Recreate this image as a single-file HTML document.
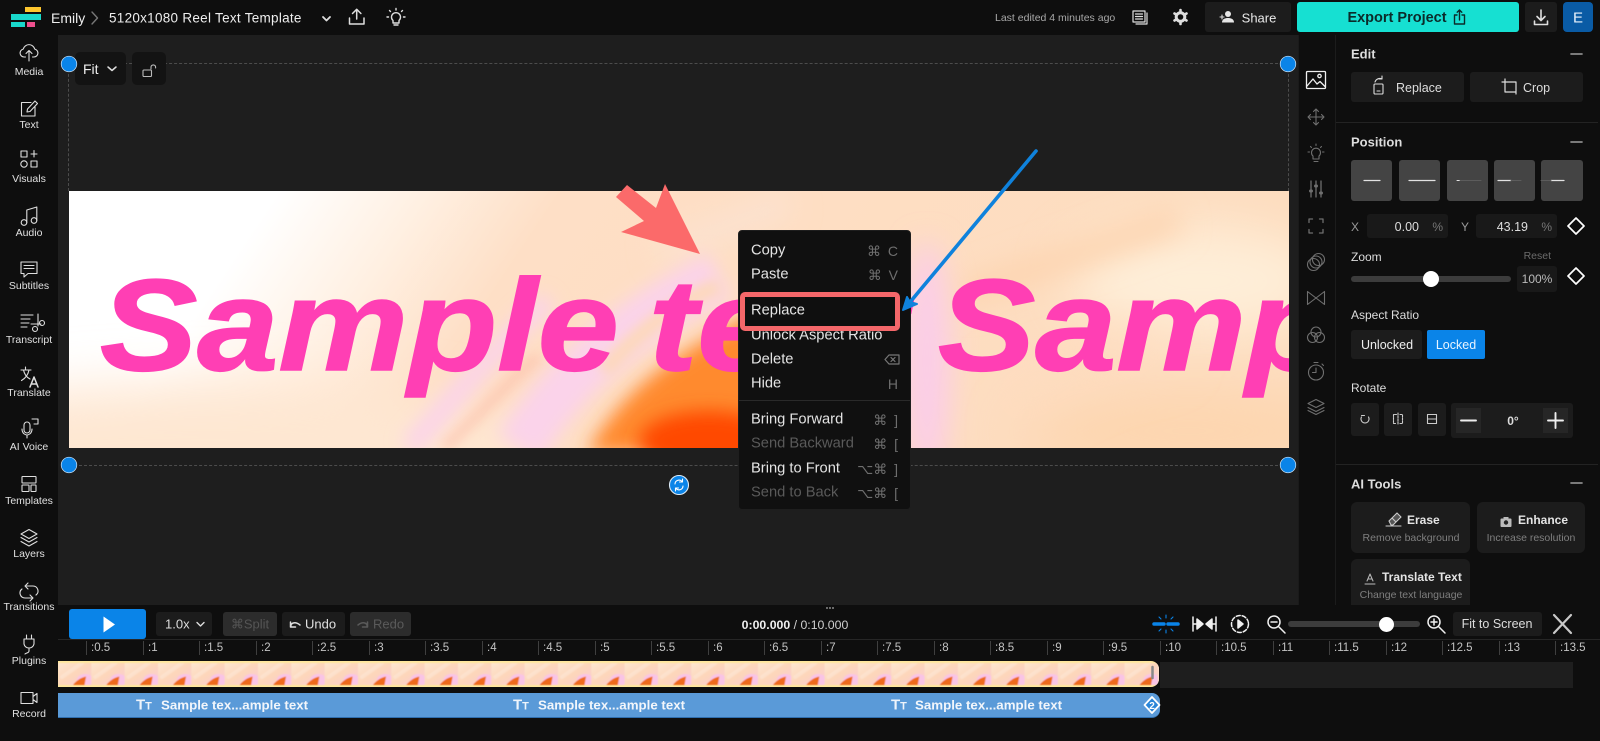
<!DOCTYPE html>
<html><head><meta charset="utf-8"><title>Replace</title>
<style>
html,body{margin:0;padding:0;background:#0e0e0e}
#p{position:relative;width:1600px;height:741px;overflow:hidden;background:#0e0e0e;font-family:"Liberation Sans",sans-serif;color:#e8e8e8}
#p div{position:absolute}
.t{white-space:nowrap;line-height:1;transform:translateY(-50%)}
.c{white-space:nowrap;line-height:1;transform:translate(-50%,-50%);text-align:center}
.r{white-space:nowrap;line-height:1;transform:translate(-100%,-50%);text-align:right}
.rl{font-size:10.5px;color:#e0e0e0;left:29px}
.b{background:#1c1c1c;border-radius:3px}
.h{font-size:13px;color:#ddd}
.pb{background:#444;border-radius:3px;top:160px;height:41px}
.m{font-size:14.7px;color:#e4e4e4;left:751px}
.d{color:#5a5a5a}
.s{font-size:14px;color:#6e6e6e;left:898px;word-spacing:3px}
.tk{top:641px;height:14px;border-left:1px solid #3f3f3f;padding-left:4px;font-size:11.5px;line-height:14px;color:#c4c4c4;white-space:nowrap}
.tt{font-size:13.3px;font-weight:bold;color:#f2f6fb;top:705px}
svg{position:absolute;left:0;top:0}
</style></head><body><div id="p">

<div style="left:58px;top:35px;width:1240px;height:570px;background:#1e1e1e"></div>
<div style="left:1298px;top:35px;width:1px;height:570px;background:#1a1a1a"></div>
<div style="left:1335px;top:35px;width:1px;height:570px;background:#1c1c1c"></div>

<!-- image -->
<div style="left:68.5px;top:191px;width:1220.5px;height:257px;overflow:hidden;background:#fde2c8">
<svg width="1221" height="257" viewBox="0 0 1221 257">
<defs>
<filter id="f1" x="-60%" y="-60%" width="220%" height="220%"><feGaussianBlur stdDeviation="26"/></filter>
<filter id="f0" x="-60%" y="-60%" width="220%" height="220%"><feGaussianBlur stdDeviation="14"/></filter>
<filter id="f2" x="-50%" y="-50%" width="200%" height="200%"><feGaussianBlur stdDeviation="9"/></filter>
<filter id="f3" x="-50%" y="-50%" width="200%" height="200%"><feGaussianBlur stdDeviation="6"/></filter>
<linearGradient id="bg" x1="0" y1="0" x2="1" y2="0" gradientTransform="rotate(8)">
<stop offset="0" stop-color="#fff"/><stop offset=".17" stop-color="#fff"/><stop offset=".29" stop-color="#fff0e2"/><stop offset=".4" stop-color="#fedfc6"/><stop offset="1" stop-color="#fddcbe"/>
</linearGradient>
</defs>
<rect width="1221" height="257" fill="url(#bg)"/>
<ellipse cx="140" cy="262" rx="340" ry="70" fill="#fee7d2" filter="url(#f1)"/>
<ellipse cx="1130" cy="90" rx="130" ry="55" fill="#feeed8" filter="url(#f1)"/>
<ellipse cx="1120" cy="240" rx="170" ry="35" fill="#fdd5ae" filter="url(#f1)"/>
<path d="M840 8L1040 8" stroke="#fbd5dc" stroke-width="24" filter="url(#f0)"/>
<path d="M890 105L1110 28" stroke="#fdd4b0" stroke-width="26" filter="url(#f0)"/>
<ellipse cx="858" cy="170" rx="24" ry="120" fill="#fbcde8" filter="url(#f0)"/>
<path d="M930 220C1000 170 1040 160 1100 150" stroke="#fedcc0" stroke-width="30" filter="url(#f1)"/>
<path d="M590 62C630 45 680 28 720 10" stroke="#fce2d0" stroke-width="26" filter="url(#f0)"/>
<path d="M450 257C500 180 560 130 650 85" stroke="#fbd3ea" stroke-width="50" fill="none" filter="url(#f2)"/>
<path d="M340 257C380 215 430 150 480 110" stroke="#fbd3ea" stroke-width="20" fill="none" filter="url(#f2)"/>
<path d="M375 257C410 225 440 190 470 165" stroke="#fcb4a0" stroke-width="10" fill="none" opacity=".55" filter="url(#f3)"/>
<path d="M535 180C570 140 610 110 650 95" stroke="#fdd9ba" stroke-width="16" fill="none" filter="url(#f3)"/>
<path d="M518 262C555 195 610 160 690 120V262Z" fill="#ff8a2e" filter="url(#f2)"/>
<ellipse cx="640" cy="250" rx="70" ry="30" fill="#ff4800" filter="url(#f2)"/>
</svg>
<div style="left:31px;top:69px;font-size:130px;line-height:130px;font-weight:bold;font-style:italic;color:#ff3fb4;white-space:pre;word-spacing:-9.5px;transform:scaleX(1.122);transform-origin:0 0;-webkit-text-stroke:1.6px #ff3fb4">Sample text Sample text</div>
</div>

<!-- dashed selection -->
<div style="left:69px;top:63px;width:1219px;border-top:1px dashed #4c4c4c"></div>
<div style="left:69px;top:465px;width:1219px;border-top:1px dashed #4c4c4c"></div>
<div style="left:68px;top:64px;height:127px;border-left:1px dashed #4c4c4c"></div>
<div style="left:1288px;top:64px;height:127px;border-left:1px dashed #4c4c4c"></div>

<!-- top bar -->
<div style="left:0;top:0;width:1600px;height:35px;background:#0e0e0e"></div>
<div style="left:25px;top:7px;width:16px;height:5px;background:#fdc62e"></div>
<div style="left:11px;top:14px;width:30px;height:6px;background:#19d8cb"></div>
<div style="left:11px;top:22px;width:14px;height:5px;background:#19d8cb"></div>
<div style="left:27px;top:22px;width:8px;height:5px;background:#ee4f8d"></div>
<div class="t" style="left:51px;top:18px;font-size:14px;color:#eee">Emily</div>
<div class="t" style="left:109px;top:18px;font-size:13.5px;color:#eee;letter-spacing:.28px">5120x1080 Reel Text Template</div>
<div class="t" style="left:995px;top:18px;font-size:10.5px;color:#a8a8a8">Last edited 4 minutes ago</div>
<div class="b" style="left:1205px;top:2px;width:86px;height:30px"></div>
<div class="c" style="left:1259px;top:18px;font-size:13px;color:#e8e8e8">Share</div>
<div style="left:1297px;top:2px;width:222px;height:30px;background:#16e0d2;border-radius:3px"></div>
<div class="c" style="left:1397px;top:18px;font-size:14.5px;font-weight:bold;color:#0b2b2a">Export Project</div>
<div class="b" style="left:1525px;top:2px;width:32px;height:30px"></div>
<div style="left:1563px;top:2px;width:30px;height:30px;background:#0a5ba5;border-radius:4px"></div>
<div class="c" style="left:1578px;top:18px;font-size:15px;color:#e8f2fb">E</div>

<!-- left rail -->
<div class="c rl" style="top:72px">Media</div>
<div class="c rl" style="top:125px">Text</div>
<div class="c rl" style="top:179px">Visuals</div>
<div class="c rl" style="top:233px">Audio</div>
<div class="c rl" style="top:286px">Subtitles</div>
<div class="c rl" style="top:340px">Transcript</div>
<div class="c rl" style="top:393px">Translate</div>
<div class="c rl" style="top:447px">AI Voice</div>
<div class="c rl" style="top:501px">Templates</div>
<div class="c rl" style="top:554px">Layers</div>
<div class="c rl" style="top:607px">Transitions</div>
<div class="c rl" style="top:661px">Plugins</div>
<div class="c rl" style="top:714px">Record</div>

<!-- fit / lock -->
<div style="left:75px;top:52px;width:51px;height:33px;background:#131313;border-radius:5px"></div>
<div class="t" style="left:83px;top:69px;font-size:14px;color:#eee">Fit</div>
<div style="left:132px;top:52px;width:34px;height:33px;background:#131313;border-radius:5px"></div>

<!-- right panel -->
<div style="left:1336px;top:35px;width:264px;height:570px;background:#0e0e0e"></div>
<div style="left:1299px;top:35px;width:36px;height:570px;background:#0e0e0e"></div>
<div style="left:1336px;top:122px;width:262px;height:1px;background:#232323"></div>
<div style="left:1336px;top:464px;width:262px;height:1px;background:#232323"></div>
<div class="t h" style="left:1351px;top:54px;font-weight:bold">Edit</div>
<div class="t h" style="left:1351px;top:142px;font-weight:bold">Position</div>
<div class="t h" style="left:1351px;top:484px;font-weight:bold">AI Tools</div>
<div class="b" style="left:1351px;top:72px;width:113px;height:30px"></div>
<div class="b" style="left:1470px;top:72px;width:113px;height:30px"></div>
<div class="t" style="left:1396px;top:88px;font-size:12.5px;color:#ddd">Replace</div>
<div class="t" style="left:1523px;top:88px;font-size:12.5px;color:#ddd">Crop</div>
<div class="pb" style="left:1351px;width:41px"></div>
<div class="pb" style="left:1399px;width:41px"></div>
<div class="pb" style="left:1447px;width:41px"></div>
<div class="pb" style="left:1494px;width:41px"></div>
<div class="pb" style="left:1541px;width:42px"></div>
<div class="t" style="left:1351px;top:227px;font-size:12px;color:#999">X</div>
<div class="t" style="left:1461px;top:227px;font-size:12px;color:#999">Y</div>
<div class="b" style="left:1367px;top:214px;width:81px;height:24px;background:#191919"></div>
<div class="b" style="left:1476px;top:214px;width:81px;height:24px;background:#191919"></div>
<div class="r" style="left:1419px;top:227px;font-size:12.5px;color:#ddd">0.00</div>
<div class="r" style="left:1528px;top:227px;font-size:12.5px;color:#ddd">43.19</div>
<div class="r" style="left:1443px;top:227px;font-size:12px;color:#777">%</div>
<div class="r" style="left:1552px;top:227px;font-size:12px;color:#777">%</div>
<div class="t h" style="left:1351px;top:257px;font-size:12px">Zoom</div>
<div class="r" style="left:1551px;top:256px;font-size:10.5px;color:#6c6c6c">Reset</div>
<div style="left:1351px;top:276px;width:160px;height:6px;background:#3c3c3c;border-radius:3px"></div>
<div style="left:1423px;top:271px;width:16px;height:16px;background:#fff;border-radius:50%"></div>
<div class="b" style="left:1517px;top:266px;width:40px;height:26px;background:#191919"></div>
<div class="c" style="left:1537px;top:279px;font-size:12px;color:#bbb">100%</div>
<div class="t h" style="left:1351px;top:315px;font-size:12px">Aspect Ratio</div>
<div class="b" style="left:1351px;top:330px;width:71px;height:29px"></div>
<div class="c" style="left:1387px;top:345px;font-size:12.5px;color:#eee">Unlocked</div>
<div style="left:1427px;top:330px;width:58px;height:29px;background:#0a84e8;border-radius:2px"></div>
<div class="c" style="left:1456px;top:345px;font-size:12.5px;color:#e8f4ff">Locked</div>
<div class="t h" style="left:1351px;top:388px;font-size:12px">Rotate</div>
<div class="b" style="left:1351px;top:403px;width:28px;height:33px"></div>
<div class="b" style="left:1384px;top:403px;width:28px;height:33px"></div>
<div class="b" style="left:1418px;top:403px;width:28px;height:33px"></div>
<div class="b" style="left:1451px;top:403px;width:122px;height:35px"></div>
<div style="left:1456px;top:408px;width:25px;height:25px;background:#262626"></div>
<div style="left:1543px;top:408px;width:25px;height:25px;background:#262626"></div>
<div class="c" style="left:1513px;top:421px;font-size:12px;font-weight:bold;color:#ddd">0°</div>
<div class="b" style="left:1351px;top:502px;width:119px;height:51px;border-radius:6px"></div>
<div class="b" style="left:1477px;top:502px;width:108px;height:51px;border-radius:6px"></div>
<div class="b" style="left:1351px;top:559px;width:119px;height:52px;border-radius:6px"></div>
<div class="t" style="left:1407px;top:520px;font-size:12px;font-weight:bold;color:#e4e4e4">Erase</div>
<div class="t" style="left:1518px;top:520px;font-size:12px;font-weight:bold;color:#e4e4e4">Enhance</div>
<div class="t" style="left:1382px;top:577px;font-size:12px;font-weight:bold;color:#e4e4e4">Translate Text</div>
<div class="c" style="left:1411px;top:538px;font-size:10.5px;color:#7f7f7f">Remove background</div>
<div class="c" style="left:1531px;top:538px;font-size:10.5px;color:#7f7f7f">Increase resolution</div>
<div class="c" style="left:1411px;top:595px;font-size:10.5px;color:#7f7f7f">Change text language</div>

<!-- bottom -->
<div style="left:58px;top:605px;width:1542px;height:136px;background:#0e0e0e"></div>
<div style="left:58px;top:639px;width:1542px;height:1px;background:#262626"></div>
<div style="left:69px;top:609px;width:77px;height:30px;background:#0a84e8;border-radius:3px"></div>
<div class="b" style="left:156px;top:612px;width:56px;height:24px"></div>
<div class="t" style="left:165px;top:624px;font-size:13px;color:#ddd">1.0x</div>
<div class="b" style="left:223px;top:612px;width:54px;height:24px;background:#2c2c2c"></div>
<div class="c" style="left:250px;top:624px;font-size:13px;color:#555">⌘Split</div>
<div class="b" style="left:282px;top:612px;width:63px;height:24px"></div>
<div class="t" style="left:305px;top:624px;font-size:13px;color:#e0e0e0">Undo</div>
<div class="b" style="left:350px;top:612px;width:61px;height:24px;background:#2c2c2c"></div>
<div class="t" style="left:373px;top:624px;font-size:13px;color:#5a5a5a">Redo</div>
<div class="c" style="left:795px;top:625px;font-size:12.3px;color:#cfcfcf"><b style="color:#eee;font-weight:bold">0:00.000</b> / 0:10.000</div>
<div style="left:1288px;top:621px;width:132px;height:6px;background:#3c3c3c;border-radius:3px"></div>
<div style="left:1379px;top:617px;width:15px;height:15px;background:#fff;border-radius:50%"></div>
<div class="b" style="left:1453px;top:612px;width:89px;height:24px"></div>
<div class="c" style="left:1497px;top:624px;font-size:12.5px;color:#ddd">Fit to Screen</div>

<!-- ruler -->
<div class="tk" style="left:86px">:0.5</div><div class="tk" style="left:143px">:1</div><div class="tk" style="left:199px">:1.5</div><div class="tk" style="left:256px">:2</div><div class="tk" style="left:312px">:2.5</div><div class="tk" style="left:369px">:3</div><div class="tk" style="left:425px">:3.5</div><div class="tk" style="left:482px">:4</div><div class="tk" style="left:538px">:4.5</div><div class="tk" style="left:595px">:5</div><div class="tk" style="left:651px">:5.5</div><div class="tk" style="left:708px">:6</div><div class="tk" style="left:764px">:6.5</div><div class="tk" style="left:821px">:7</div><div class="tk" style="left:877px">:7.5</div><div class="tk" style="left:934px">:8</div><div class="tk" style="left:990px">:8.5</div><div class="tk" style="left:1047px">:9</div><div class="tk" style="left:1103px">:9.5</div><div class="tk" style="left:1160px">:10</div><div class="tk" style="left:1216px">:10.5</div><div class="tk" style="left:1273px">:11</div><div class="tk" style="left:1329px">:11.5</div><div class="tk" style="left:1386px">:12</div><div class="tk" style="left:1442px">:12.5</div><div class="tk" style="left:1499px">:13</div><div class="tk" style="left:1555px">:13.5</div>

<div style="left:1160px;top:662px;width:413px;height:26px;background:#1e1e1e"></div>
<div style="left:58px;top:693px;width:1102px;height:25px;background:#5a9ad8;border-radius:0 8px 8px 0;border-bottom:1px solid #2f6fb0;box-sizing:border-box"></div>
<div class="t" style="left:136px;top:705px;font-size:15px;font-weight:bold;color:#eef4fb">T<span style="font-size:11px">T</span></div>
<div class="t" style="left:513px;top:705px;font-size:15px;font-weight:bold;color:#eef4fb">T<span style="font-size:11px">T</span></div>
<div class="t" style="left:891px;top:705px;font-size:15px;font-weight:bold;color:#eef4fb">T<span style="font-size:11px">T</span></div>
<div class="t tt" style="left:161px">Sample tex...ample text</div>
<div class="t tt" style="left:538px">Sample tex...ample text</div>
<div class="t tt" style="left:915px">Sample tex...ample text</div>

<!-- context menu -->
<div style="left:738px;top:230px;width:173px;height:280px;background:#101010;border-radius:4px;border:1px solid #1e1e1e;box-sizing:border-box"></div>
<div style="left:739px;top:400px;width:171px;height:1px;background:#2a2a2a"></div>
<div class="t m" style="top:250.500px">Copy</div>
<div class="t m" style="top:274.500px">Paste</div>
<div class="t m" style="top:335.500px">Unlock Aspect Ratio</div>
<div class="t m" style="top:359.500px">Delete</div>
<div class="t m" style="top:383.500px">Hide</div>
<div class="t m" style="top:419.500px">Bring Forward</div>
<div class="t m d" style="top:444px">Send Backward</div>
<div class="t m" style="top:468.500px">Bring to Front</div>
<div class="t m d" style="top:492.500px">Send to Back</div>
<div class="r s" style="top:250.500px">⌘ C</div>
<div class="r s" style="top:274.500px">⌘ V</div>
<div class="r s" style="top:383.500px">H</div>
<div class="r s" style="top:419.500px">⌘ ]</div>
<div class="r s" style="top:444px">⌘ [</div>
<div class="r s" style="top:468.500px">⌥⌘ ]</div>
<div class="r s" style="top:492.500px">⌥⌘ [</div>
<div style="left:740px;top:292px;width:160px;height:39px;box-sizing:border-box;border:5px solid #f4676a;border-radius:5px;background:#0f0f0f"></div>
<div class="t m" style="top:310.500px">Replace</div>

<!-- all vector icons -->
<svg width="1600" height="741" viewBox="0 0 1600 741" fill="none" stroke="#dedede" stroke-width="1.100" stroke-linecap="round" stroke-linejoin="round">
<defs>
<linearGradient id="tg" x1="0" y1="0" x2="1" y2="1"><stop offset="0" stop-color="#fde6d0"/><stop offset=".5" stop-color="#fdd6ba"/><stop offset="1" stop-color="#fbc8da"/></linearGradient>
<filter id="ts"><feGaussianBlur stdDeviation=".5"/></filter>
<pattern id="th" x="58" y="663" width="33.33" height="22" patternUnits="userSpaceOnUse">
<rect width="33.33" height="22" fill="url(#tg)" stroke="none"/>
<path d="M4 14L24 0" stroke="#fff" stroke-width="4" opacity=".2"/>
<ellipse cx="27" cy="17" rx="8" ry="6" fill="#f9c4e6" stroke="none"/>
<path d="M15 22C18 18 22 15 28 13.500L26.500 22Z" fill="#ee6a1e" stroke="none"/>
</pattern>
<clipPath id="cr"><path d="M58 661H1151a8 8 0 0 1 8 8V679a8 8 0 0 1-8 8H58Z"/></clipPath>
</defs>

<!-- top bar icons -->
<path d="M92 12l5.500 6-5.500 6" stroke="#777" stroke-width="1.400"/>
<path d="M323 17l3.500 3.500 3.500-3.500" stroke-width="1.800"/>
<g stroke-width="1.500"><path d="M349.500 18v6h14.500v-6M356.700 19V9.500M352.500 13.500l4.200-4.200 4.200 4.200"/></g>
<g transform="translate(396,17)" stroke-width="1.400"><path d="M-3 3.500a4.500 4.500 0 1 1 6 0V6h-6ZM-2 8h4M0-8.500v1.500M-7.500 0h-1.500M9 0h-1.500M-5.500-5.500l-1-1M5.500-5.500l1-1"/></g>
<g stroke-width="1.200"><path d="M1133 11h12v11h-12ZM1135.500 14h7M1135.500 16.500h7M1135.500 19h7M1147 13v11h-11"/></g>
<g transform="translate(1180.500,17)"><circle r="4.300" stroke-width="3"/><path stroke-width="2.600" d="M0-7V-6M0 7V6M-6-3.500l1 .6M6 3.500l-1-.6M-6 3.500l1-.6M6-3.500l-1 .6"/></g>
<g fill="#e6e6e6" stroke="none"><circle cx="1228" cy="14" r="3"/><path d="M1222 22.500c0-3.500 3-4.500 6-4.500s6 1 6 4.500Z"/></g><path d="M1220 17h4M1222 15v4"/>
<g stroke="#0b2b2a" stroke-width="1.400"><path d="M1457 15h-2.500v9h10V15H1462M1459.500 20V10M1457.200 12.300l2.300-2.300 2.300 2.300"/></g>
<g stroke-width="1.600"><path d="M1541 10v10M1537 16.500l4 4 4-4M1534.500 21v3.500h13V21"/></g>

<!-- left rail icons -->
<g transform="translate(29,52)"><path d="M-3.500 5H-5a4 4 0 0 1-.8-7.900 6 6 0 0 1 11.600 0A4 4 0 0 1 5 5H3.500M0 9V-1.500M-3 1.500l3-3 3 3"/></g>
<g transform="translate(29,109)"><path d="M2-6.500H-7.500V7H6V-2M-2 3l.5-3L6-8l2.500 2.500L1 2.500Z"/></g>
<g transform="translate(29,159)"><rect x="-8" y="-8" width="6" height="6"/><path d="M5-8.500v6.500M2-5h6"/><circle cx="-5" cy="5" r="3.200"/><rect x="2" y="2" width="6" height="6"/></g>
<g transform="translate(29,216)"><circle cx="-5" cy="6.500" r="2.800"/><circle cx="5" cy="4.500" r="2.800"/><path d="M-2.200 6.500V-6L7.800-9V4.500"/></g>
<g transform="translate(29,269)"><path d="M-8-7H8V4.500H-1L-5 8V4.500H-8ZM-5-3.500H5M-5-.5H5"/></g>
<g transform="translate(33,322)"><path d="M-12-7H0M-12-3H-3M-12 1H-4M-12 5H-6M5-8V4"/><circle cx="9" cy="1" r="2.500"/><circle cx="2" cy="7" r="2.500"/><path d="M-2 2H8"/></g>
<g transform="translate(29,377)"><path d="M-8-7H2M-3.500-10V-7M-5.500-7C-4.500-2-2 .5 1 2M0-7C-1-2-4 1.500-7.500 3.500"/><path stroke-width="1.500" d="M1 10L5 0l4 10M2.500 7H7.500"/></g>
<g transform="translate(29,427)"><rect x="-5" y="-5" width="6" height="11" rx="3"/><path d="M-7 2C-7 7-3 8-2 8S3 7 3 2M-2 8v3M3-8H9V-3H5"/></g>
<g transform="translate(29,484)"><rect x="-7" y="-7.500" width="14" height="6.500" rx=".5"/><rect x="-7" y="1" width="7" height="6.500" rx=".5"/><rect x="2" y="1" width="5" height="6.500" rx=".5"/></g>
<g transform="translate(29,538)"><path d="M0-8.500L8-4 0 .5-8-4ZM-8-.5L0 4 8-.5M-8 3.500L0 8 8 3.500"/></g>
<g transform="translate(29,592)"><path d="M-3-6H4A5 5 0 0 1 7 3M3 6H-4A5 5 0 0 1-7-3M-1-9l-3 3 3 3M1 9l3-3-3-3"/></g>
<g transform="translate(29,644)"><path d="M-2.500-9v4M2.500-9v4M-5-5H5V0A5 5 0 0 1 0 4a5 5 0 0 1-5-4ZM0 4v3C0 9-3 9-4 10"/></g>
<g transform="translate(29,698)"><path d="M-8-5.500H4V5.500H-8ZM4-1.500L8-4.500V4.500L4 1.500"/></g>

<!-- fit + lock icons -->
<path d="M108 67l4 3.500 4-3.500" stroke-width="1.500"/>
<g stroke-width="1.100" stroke="#bbb"><rect x="143" y="70" width="8.500" height="6.500" rx="1"/><path d="M151 69v-1.800a2.300 2.300 0 0 1 4.600 0V68"/></g>

<!-- handles -->
<g fill="#0a84e8" stroke="#cfe4f7" stroke-width=".7"><circle cx="69" cy="64" r="7.800"/><circle cx="1288" cy="64" r="7.800"/><circle cx="69" cy="465" r="7.800"/><circle cx="1288" cy="465" r="7.800"/></g>
<circle cx="679" cy="485" r="9.500" fill="#0a84e8" stroke="#dcebf8"/>
<path d="M675 484a4 4 0 0 1 7-2.500M683 486a4 4 0 0 1-7 2.500M682.500 479v3h-3M675.500 491v-3h3" stroke="#fff" stroke-width="1.100"/>

<!-- right rail icons -->
<g transform="translate(1316,80)" stroke="#f0f0f0" stroke-width="1.300"><rect x="-9.500" y="-8.500" width="19" height="17" rx="1"/><path d="M-9 6L-3-1 1 4l3-2.500 5 5"/><circle cx="3.500" cy="-4" r="1.700"/></g>
<g stroke="#6f6f6f" stroke-width="1.100">
<g transform="translate(1316,117)"><path d="M0-8V8M-8 0H8M-2.500-5.500L0-8l2.500 2.500M-2.500 5.500L0 8l2.500-2.500M-5.500-2.500L-8 0l2.500 2.500M5.500-2.500L8 0 5.500 2.500"/></g>
<g transform="translate(1316,153)"><path d="M-3 3a4.500 4.500 0 1 1 6 0V6h-6ZM-2 8.500h4M0-9v1.500M-8-1h1.500M8-1H6.500M-5.500-6.500l1 1M5.500-6.500l-1 1"/></g>
<g transform="translate(1316,189)" stroke-width="1.300"><path d="M-5-8V8M0-8V8M5-8V8"/><path stroke-width="3" d="M-5.500 2h1M-.5-3h1M4.500 4h1"/></g>
<g transform="translate(1316,226)" stroke-width="1.300"><path d="M-7-3.500V-7H-3.500M3.500-7H7V-3.500M7 3.500V7H3.500M-3.500 7H-7V3.500"/></g>
<g transform="translate(1316,262)"><circle cx="2.500" cy="-2.500" r="6"/><circle cx="-2.500" cy="2.500" r="6"/><circle cx="0" cy="0" r="6"/></g>
<g transform="translate(1316,298)"><path d="M-8.500-6.500V6.500L0 0ZM8.500-6.500V6.500L0 0Z"/></g>
<g transform="translate(1316,335)"><circle cy="-3" r="5"/><circle cx="-3.500" cy="2.500" r="5"/><circle cx="3.500" cy="2.500" r="5"/></g>
<g transform="translate(1316,371)"><circle cy="1.500" r="7.500"/><path d="M0-3V1.500H-3.500M-2-8.500H2M6-7l1.500 1.500"/></g>
<g transform="translate(1316,407)"><path d="M0-7L8-3 0 1-8-3ZM-8 1L0 5 8 1M-8 4L0 8 8 4" transform="translate(0,-.5)"/></g>
</g>

<!-- panel icons -->
<g stroke="#8a8a8a" stroke-width="1.700"><path d="M1571 54h11M1571 142h11M1571 483h11"/></g>
<g stroke="#ddd" stroke-width="1.100"><rect x="1374" y="84" width="9" height="10" rx="1"/><path d="M1377 91h3M1375 82a5 5 0 0 1 7-3M1382 76v3h-3"/></g>
<g stroke="#ddd" stroke-width="1.200"><path d="M1505 79v13h11M1502 82h14v12"/></g>
<g stroke="#e2e2e2" stroke-width="1.200"><path d="M1364 180.500h16M1409 180.500h26M1498 180.500h13M1551 180.500h13"/></g>
<g stroke="#e2e2e2" stroke-width="1"><path d="M1457 180.500h3"/></g>
<g stroke="#5c5c5c" stroke-width="1"><path d="M1460 180.500h21M1511 180.500h10M1541 180.500h10"/></g>
<g stroke="#fff" stroke-width="1.700"><path d="M1576 218l8 8-8 8-8-8ZM1576 268l8 8-8 8-8-8Z"/></g>
<g transform="translate(1365,419)" stroke="#ccc"><path d="M3.500-2a4 4 0 1 1-7 0M-3.500-3.500h3"/></g>
<g transform="translate(1398,419)" stroke="#ccc"><path d="M0-6V6M-1.500-4.500H-4.500V4.500H-1.500M2 -4.500H4.500V4.500H2" stroke-dasharray="2 1"/></g>
<g transform="translate(1432,419)" stroke="#ccc"><rect x="-4.500" y="-4.500" width="9" height="9"/><path d="M-4.500 0H4.500"/></g>
<g stroke="#eee" stroke-width="1.900"><path d="M1461 420.500h15M1548 420.500h15M1555.500 413v15"/></g>
<g transform="translate(1394,519)" stroke="#ccc" stroke-width="1.100"><path d="M-5 2L3-6l4 4-8 8H-3ZM-8 7H7M-2-1l4 4" fill="#555"/></g>
<g transform="translate(1506,522)"><rect x="-5.500" y="-3.500" width="11" height="8.500" rx="1" fill="#bbb" stroke="none"/><circle cy=".5" r="2.200" fill="#222" stroke="none"/><rect x="-2.500" y="-5" width="5" height="2" fill="#bbb" stroke="none"/></g>
<g transform="translate(1370,578)" stroke="#bbb" stroke-width="1"><path d="M-3 3L0-4 3 3M-2 1H2M-5 6H5"/></g>

<!-- bottom icons -->
<path d="M103.500 616.500L115 624.500l-11.500 8Z" fill="#fff" stroke="none"/>
<path d="M197 622.500l3.500 3.500 3.500-3.500" stroke-width="1.400"/>
<path d="M291 627c-1-4 4-6 9-2M290.500 622v5h5" stroke-width="1.500"/>
<path d="M367 627c1-4-4-6-9-2M367.500 622v5h-5" stroke="#5a5a5a" stroke-width="1.500"/>
<g fill="#888" stroke="none"><circle cx="827" cy="608" r="1"/><circle cx="830" cy="608" r="1"/><circle cx="833" cy="608" r="1"/></g>
<g stroke="#0a84e8"><path d="M1154 624h10M1168 624h10" stroke-width="3.500"/><path d="M1166 615v3M1166 630v3M1159 617l2 2M1173 617l-2 2M1159 631l2-2M1173 631l-2-2" stroke-width="1.100"/></g>
<g stroke="#f0f0f0" stroke-width="1.500"><path d="M1193 617v14M1216 617v14M1193 624h9M1216 624h-9"/><path d="M1197 619l6 5-6 5ZM1212 619l-6 5 6 5Z" fill="#f0f0f0"/></g>
<g stroke="#f0f0f0" stroke-width="1.500"><circle cx="1240" cy="624" r="8.500" stroke-dasharray="4 2"/><path d="M1238 620l5 4-5 4Z" fill="#f0f0f0"/></g>
<g stroke="#f0f0f0" stroke-width="1.500"><circle cx="1274" cy="622" r="6"/><path d="M1271 622h6M1279 627l6 6"/><circle cx="1434" cy="622" r="6"/><path d="M1431 622h6M1434 619v6M1439 627l6 6"/></g>
<path d="M1554 615l17 18M1571 615l-17 18" stroke="#c8c8c8" stroke-width="2.200"/>

<!-- tracks -->
<g clip-path="url(#cr)"><rect x="58" y="661" width="1102" height="26" fill="#ffe79c" stroke="none"/><rect x="58" y="663" width="1102" height="22" fill="url(#th)" stroke="none" filter="url(#ts)"/></g>
<path d="M1152.500 667v11" stroke="#888" stroke-width="2.500"/>
<path d="M1152 697l7.500 8-7.500 8-7.500-8Z" fill="#2b86d8" stroke="#fff" stroke-width="1.800"/>
<text x="1152" y="709" text-anchor="middle" font-size="10" font-weight="bold" fill="#fff" stroke="none" font-family="Liberation Sans, sans-serif">2</text>

<!-- delete key glyph -->
<g stroke="#777" stroke-width="1.200"><path d="M885 359.500l4-4.500h10v9h-10ZM891 357.500l4 4M895 357.500l-4 4"/></g>

<!-- annotation arrows -->
<path d="M700 254L665 184 656 208 627 185 616 197 644 221 621 232Z" fill="#fb6a6a" stroke="none"/>
<path d="M1036 151L906 307" stroke="#0f82dc" stroke-width="3.600" stroke-linecap="round"/>
<path d="M903 310L907 297 910 302 917 304Z" fill="#0f82dc" stroke="#0f82dc" stroke-width="2"/>
</svg>
</div></body></html>
